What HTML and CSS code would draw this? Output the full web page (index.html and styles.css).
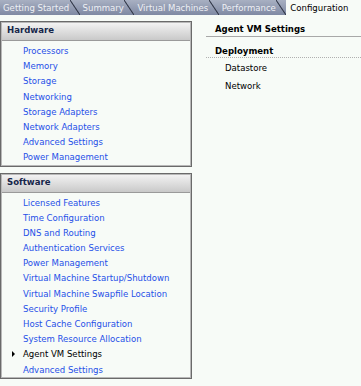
FILE: index.html
```html
<!DOCTYPE html>
<html>
<head>
<meta charset="utf-8">
<link rel="stylesheet" href="styles.css">
</head>
<body>
<div class="tabs">
  <div class="tab">Getting Started</div>
  <div class="tab">Summary</div>
  <div class="tab">Virtual Machines</div>
  <div class="tab">Performance</div>
  <div class="tab active">Configuration</div>
</div>
<div class="main">
  <div class="side">
    <div class="box">
      <div class="box-head">Hardware</div>
      <ul class="list">
        <li>Processors</li>
        <li>Memory</li>
        <li>Storage</li>
        <li>Networking</li>
        <li>Storage Adapters</li>
        <li>Network Adapters</li>
        <li>Advanced Settings</li>
        <li>Power Management</li>
      </ul>
    </div>
    <div class="box">
      <div class="box-head">Software</div>
      <ul class="list">
        <li>Licensed Features</li>
        <li>Time Configuration</li>
        <li>DNS and Routing</li>
        <li>Authentication Services</li>
        <li>Power Management</li>
        <li>Virtual Machine Startup/Shutdown</li>
        <li>Virtual Machine Swapfile Location</li>
        <li>Security Profile</li>
        <li>Host Cache Configuration</li>
        <li>System Resource Allocation</li>
        <li class="current">Agent VM Settings</li>
        <li>Advanced Settings</li>
      </ul>
    </div>
  </div>
  <div class="content">
    <div class="title">Agent VM Settings</div>
    <div class="section">Deployment</div>
    <div class="item first">Datastore</div>
    <div class="item">Network</div>
  </div>
</div>
</body>
</html>
```
FILE: styles.css
```css
html, body {
  margin: 0;
  padding: 0;
  background: #f7fbf7;
  font-family: "DejaVu Sans Condensed", "DejaVu Sans", sans-serif;
  font-size: 9.5px;
  color: #000;
  width: 361px;
  height: 386px;
  overflow: hidden;
}
.tabs {
  display: flex;
  height: 15px;
  background: linear-gradient(#a4acbe, #7c86a0);
  white-space: nowrap;
  overflow: hidden;
}
.tab {
  position: relative;
  color: #eef0f4;
  line-height: 15px;
  padding: 0 10.5px 0 3px;
  background: linear-gradient(#a8b0c2, #7f89a3);
}
.tab::after {
  content: "";
  position: absolute;
  right: 0;
  top: 0;
  width: 10px;
  height: 15px;
  background: linear-gradient(to top right, transparent 44%, #2a3040 50%, transparent 56%);
}
.tab.active {
  background: #f7fbf7;
  color: #000;
  padding: 0 6px 0 4px;
  flex: 1;
}
.tab.active::after { display: none; }
.main {
  display: flex;
  padding-top: 6px;
}
.side {
  width: 192px;
  flex: none;
  display: flex;
  flex-direction: column;
  gap: 6px;
}
.box {
  border: 1px solid #6a6a6a;
  box-shadow: inset 0 0 0 1px #b8b8b8;
}
.box-head {
  height: 13px;
  line-height: 13px;
  padding: 0 0 4px 5px;
  font-weight: bold;
  color: #16264a;
  background: linear-gradient(#f2f2f2, #c9c9c9);
  border-bottom: 1px solid #9a9a9a;
  margin: 1px 1px 0 1px;
}
.list {
  list-style: none;
  margin: 0;
  padding: 2px 0 1px 22px;
}
.list li {
  color: #1f50e8;
  line-height: 15.2px;
  height: 15.2px;
}
.list li.current {
  color: #000;
  position: relative;
}
.list li.current::before {
  content: "";
  position: absolute;
  left: -11px;
  top: 5px;
  border-left: 3px solid #000;
  border-top: 3px solid transparent;
  border-bottom: 3px solid transparent;
}
.content {
  flex: 1;
  padding-left: 14px;
}
.title {
  font-weight: bold;
  line-height: 11px;
  padding: 2px 0 2px 9px;
  border-bottom: 1px solid #a8a8a8;
}
.section {
  font-weight: bold;
  line-height: 11px;
  padding: 7.5px 0 1.5px 9px;
  border-bottom: 1px dotted #b0b0b0;
}
.item {
  padding-left: 19px;
  line-height: 18px;
}
.item.first { margin-top: 1px; }
```
